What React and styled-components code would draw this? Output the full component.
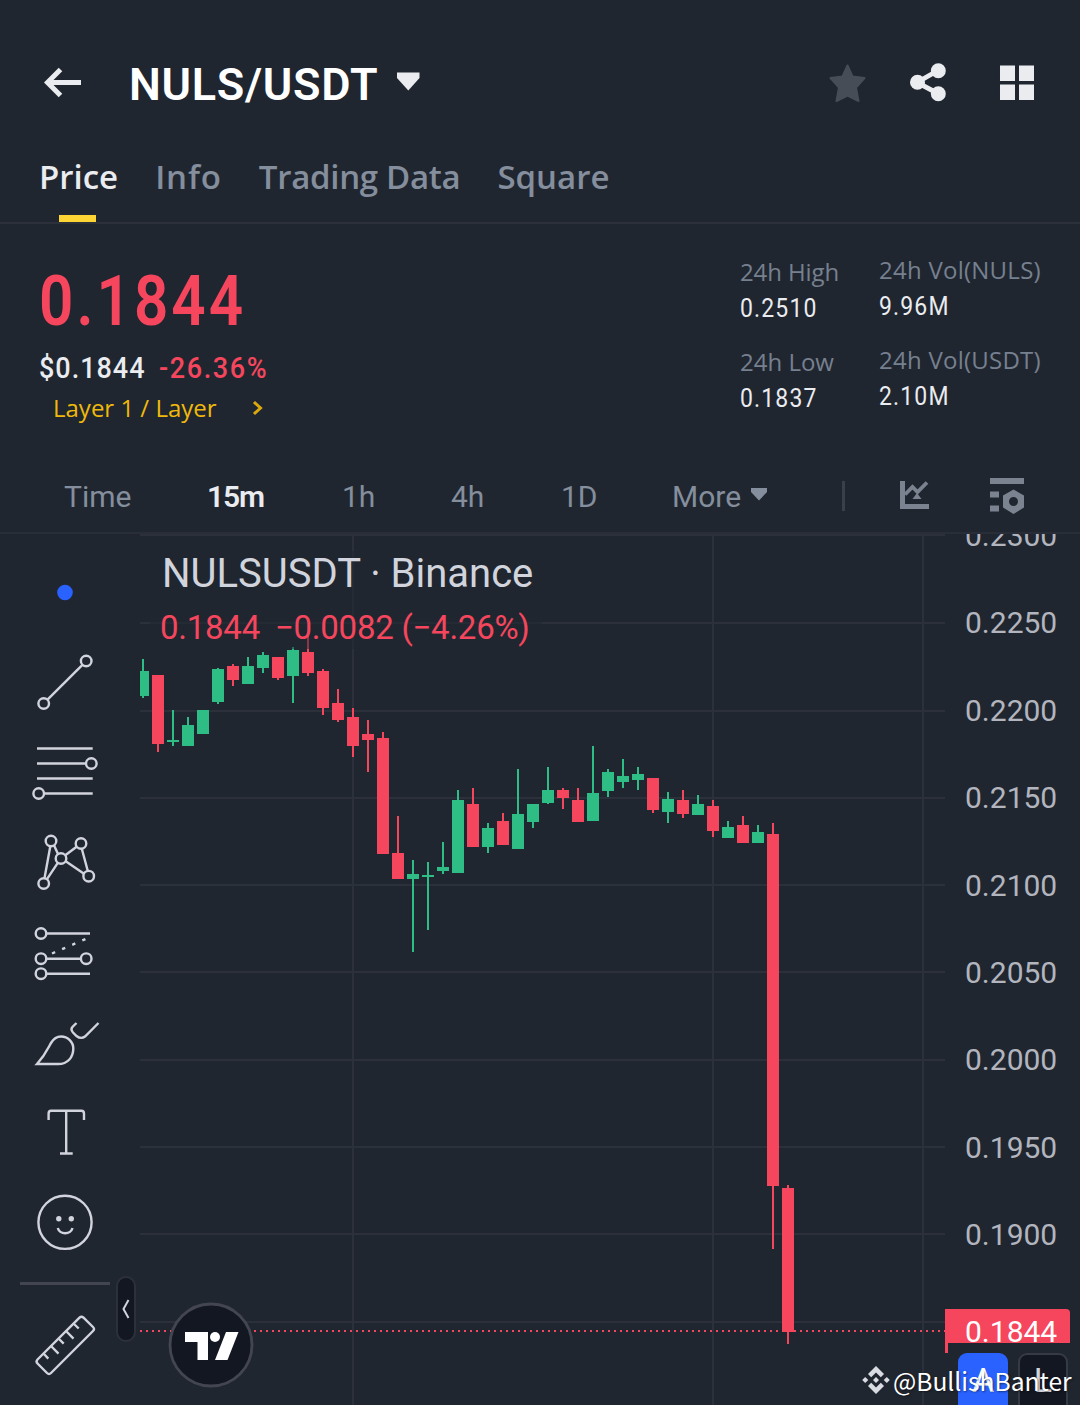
import React from 'react'
import styled, { createGlobalStyle } from 'styled-components'

const red = '#f6465d'
const green = '#2ebd85'

const tabs = [
  { name: "Price", active: true },
  { name: "Info", spacing: 0.9 },
  { name: "Trading Data", spacing: -0.3 },
  { name: "Square" }
]

const intervals = ["Time", "15m", "1h", "4h", "1D"]

const prices = ["0.2300", "0.2250", "0.2200", "0.2150", "0.2100", "0.2050", "0.2000", "0.1950", "0.1900"]

// [up, high, bodyTop, bodyBottom, low] one every 15px
const candles = [
  [1, 659, 671, 696, 697.5],
  [0, 675, 675, 744.4, 752.4],
  [1, 710, 740, 742.4, 746.4],
  [1, 717, 725, 746.4, 746.4],
  [1, 710, 710, 734, 734],
  [1, 668, 669, 702.4, 704.4],
  [0, 664, 666, 680, 686],
  [1, 657, 666, 684.4, 684.4],
  [1, 652, 655, 668, 673.4],
  [0, 657, 657, 678, 680.4],
  [1, 647, 650, 676.4, 703.4],
  [0, 636, 652, 673, 676.4],
  [0, 669, 671, 708, 715.4],
  [0, 689, 703, 720, 722.4],
  [0, 708, 717, 746.4, 757.4],
  [0, 720, 734, 740.4, 772.4],
  [0, 732, 738, 854.4, 854.4],
  [0, 816, 853, 879, 879.4],
  [1, 860, 874, 879, 952.4],
  [1, 862, 875, 877.4, 930.4],
  [1, 842, 867, 871.4, 874.4],
  [1, 790, 800, 873.4, 873.4],
  [0, 788, 804, 847.4, 847.4],
  [1, 823, 828, 847.4, 853.4],
  [0, 813, 821, 845.4, 845.4],
  [1, 769, 814, 849.4, 849.4],
  [1, 804, 804, 822.4, 828.4],
  [1, 767, 790, 803.4, 804.4],
  [0, 788, 790, 798.4, 809.4],
  [0, 788, 800, 822.4, 822.4],
  [1, 746, 793, 821.4, 821.4],
  [1, 769, 772, 791.4, 797.4],
  [1, 759, 776, 782.4, 788.4],
  [1, 767, 774, 780.4, 790.4],
  [0, 778, 778, 810.4, 813.4],
  [1, 792, 799, 812.4, 823.4],
  [0, 790, 800, 814.4, 818.4],
  [1, 795, 804, 815.4, 815.4],
  [0, 800, 806, 831.4, 837.4],
  [1, 821, 827, 838.4, 838.4],
  [0, 816, 825, 843.4, 843.4],
  [1, 825, 832, 843.4, 843.4],
  [0, 823, 834, 1186.4, 1249],
  [0, 1185, 1188, 1332.4, 1344]
]

const gridRows = [534, 622, 710, 797, 884, 971, 1059, 1146, 1233, 1321]
const gridCols = [353, 713, 923]

export default function App(){
  return (
    <Page>
      <GlobalStyle />
      <Header>
        <BackIcon viewBox="0 0 38 32">
          <path d="M16.500 2.500 3.500 15.500 16.500 28.500" />
          <path d="M5 15.500H37" />
        </BackIcon>
        <Pair>NULS/USDT</Pair>
        <PairCaret viewBox="0 0 24 19"><path d="M1 .5H23.500V6L12.300 18.500 1 6Z" fill="#eaecef" /></PairCaret>
        <HeaderIcons>
          <svg width="38" height="40" viewBox="0 0 38 40">
            <path d="M19.500 2.500 24.500 13.500 36.500 15 28 24.500 30.500 38 19.500 32.500 8.500 38 11 24.500 2.500 15 14.500 13.500Z" fill="#474d57" stroke="#474d57" strokeWidth="2" strokeLinejoin="round" />
          </svg>
          <svg width="38" height="40" viewBox="0 0 38 40">
            <path d="M29 7.500 8 19.500 29 30.500" fill="none" stroke="#eaecef" strokeWidth="4.800" />
            <circle cx="29.300" cy="7.700" r="7.500" fill="#eaecef" />
            <circle cx="8.500" cy="19.300" r="7.500" fill="#eaecef" />
            <circle cx="29.300" cy="30.700" r="7.500" fill="#eaecef" />
          </svg>
          <svg width="34" height="36" viewBox="0 0 34 36">
            <path d="M0 .5h15v15.500H0zM19 .5h15v15.500H19zM0 19.500h15v15.500H0zM19 19.500h15v15.500H19z" fill="#eaecef" />
          </svg>
        </HeaderIcons>
      </Header>

      <TabBar>
        {tabs.map(tab => <Tab key={tab.name} $active={tab.active} $spacing={tab.spacing}>{tab.name}</Tab>)}
      </TabBar>

      <Quote>
        <PriceBlock>
          <LastPrice>0.1844</LastPrice>
          <FiatRow>
            <Fiat>$0.1844</Fiat>
            <Change>-26.36%</Change>
          </FiatRow>
          <TagRow>
            Layer 1 / Layer
            <svg width="12" height="16" viewBox="0 0 12 16">
              <path d="M2 2 8.500 8 2 14" fill="none" stroke="#d9a90f" strokeWidth="3" />
            </svg>
          </TagRow>
        </PriceBlock>
        <Stats $width={139} $top={30}>
          <Label $spacing={-0.1}>24h High</Label>
          <Value>0.2510</Value>
          <Label $spacing={0}>24h Low</Label>
          <Value>0.1837</Value>
        </Stats>
        <Stats $width={201} $top={28}>
          <Label $spacing={0.25}>24h Vol(NULS)</Label>
          <Value>9.96M</Value>
          <Label $spacing={0.25}>24h Vol(USDT)</Label>
          <Value>2.10M</Value>
        </Stats>
      </Quote>

      <IntervalBar>
        {intervals.map(item => <Interval key={item} $active={item === "15m"}>{item}</Interval>)}
        <Interval>
          More
          <MoreCaret viewBox="0 0 18 13"><path d="M1 0H17V4L9 12.500 1 4Z" fill="#848e9c" /></MoreCaret>
        </Interval>
        <BarDivider />
        <svg width="30" height="32" viewBox="0 0 30 32">
          <path d="M2.500 1V26.500H29" fill="none" stroke="#7b8390" strokeWidth="5" />
          <path d="M5 14.500 12.500 7 17.500 12 27 2.500" fill="none" stroke="#7b8390" strokeWidth="3.800" />
          <path d="M17 13 21.500 19H12.500Z" fill="#7b8390" />
        </svg>
        <svg width="38" height="38" viewBox="0 0 38 38">
          <path d="M1 4H35M1 17.500H10M1 31.500H10" stroke="#7b8390" strokeWidth="6" />
          <path fillRule="evenodd" d="M24.500 12.500 35 18.500V30.500L24.500 37 14 30.500V18.500ZM24.500 20A4.500 4.500 0 1 0 24.500 29 4.500 4.500 0 1 0 24.500 20" fill="#7b8390" />
        </svg>
      </IntervalBar>

      <ChartArea>
        <Tools />
        <Plot>
          <Candles />
          <Legend>
            <Symbol>NULSUSDT · Binance</Symbol>
            <Delta><span>0.1844</span><span>−0.0082 (−4.26%)</span></Delta>
          </Legend>
          <ChartLogo viewBox="0 0 86 86">
            <circle cx="43" cy="43" r="41" fill="#131722" stroke="#434651" strokeWidth="2.800" />
            <path d="M17 30H40V58H29.500V40H17Z" fill="#fff" />
            <circle cx="47" cy="35" r="5" fill="#fff" />
            <path d="M58 30H70.500L59.500 58H47Z" fill="#fff" />
          </ChartLogo>
        </Plot>
        <Axis>
          {prices.map(p => <AxisLabel key={p}>{p}</AxisLabel>)}
          <PriceTag>0.1844</PriceTag>
          <TagEdge />
          <ScaleButtons>
            <ScaleButton $active>A</ScaleButton>
            <ScaleButton>L</ScaleButton>
          </ScaleButtons>
        </Axis>
        <Collapse>
          <svg width="8" height="20" viewBox="0 0 8 20"><path d="M6.500 1 1.500 10 6.500 19" fill="none" stroke="#d1d4dc" strokeWidth="2" /></svg>
        </Collapse>
        <Watermark>
          <svg width="28" height="28" viewBox="0 0 28 28" fill="#d9dbe3">
            <path d="M14 0 22 8 18.800 11.200 14 6.400 9.200 11.200 6 8Z" />
            <path d="M14 28 22 20 18.800 16.800 14 21.600 9.200 16.800 6 20Z" />
            <path d="M14 11 17 14 14 17 11 14ZM3.200 11 6.300 14 3.200 17 .2 14ZM24.800 11 27.800 14 24.800 17 21.700 14Z" />
          </svg>
          @BullishBanter
        </Watermark>
      </ChartArea>
    </Page>
  )
}

function Tools(){
  return (
    <ToolColumn>
      <ToolIcon viewBox="0 0 130 90"><circle cx="65" cy="45.500" r="7.800" fill="#2962ff" stroke="none" /></ToolIcon>
      <ToolIcon viewBox="0 0 130 90">
        <circle cx="86.200" cy="24" r="5.300" />
        <circle cx="43.700" cy="66.500" r="5.300" />
        <path d="M47.500 62.700 82.400 27.800" />
      </ToolIcon>
      <ToolIcon viewBox="0 0 130 90">
        <path d="M37 21.500H92.700M37 36.500H86M37 51.500H92.700M44 66.500H92.700" />
        <circle cx="91.300" cy="36.500" r="5.300" />
        <circle cx="38.700" cy="66.500" r="5.300" />
      </ToolIcon>
      <ToolIcon viewBox="0 0 130 90">
        <circle cx="51" cy="24" r="5.300" />
        <circle cx="81" cy="26.500" r="5.300" />
        <circle cx="61" cy="41.500" r="5.300" />
        <circle cx="43.700" cy="66.500" r="5.300" />
        <circle cx="88.700" cy="59.200" r="5.300" />
        <path d="M50.300 29.300 44.500 61.200M54 28.300 58 37M65.300 38.300 76.600 29.700M57.800 45.800 47 62.200M65.700 44.200 84 56.700M81.800 31.800 87.800 54" />
      </ToolIcon>
      <ToolIcon viewBox="0 0 130 90">
        <circle cx="41" cy="26.500" r="5.300" />
        <circle cx="41" cy="51.700" r="5.300" />
        <circle cx="41" cy="66.700" r="5.300" />
        <circle cx="86.200" cy="51.700" r="5.300" />
        <path d="M46.500 26.500H90M46.500 51.700H80.700M46.500 66.700H90" />
        <path d="M52 46.500 88 31" strokeDasharray="3.400 7.600" />
      </ToolIcon>
      <ToolIcon viewBox="0 0 130 90">
        <path d="M37 67C46 57 48.500 50 51 46C54 41 57 39.500 61 39.500C68 39.500 73.300 45 73.300 51.500C73.300 60 68 67 58 67Z" />
        <path d="M76.500 26 73 29.300Q70 32 73 35.500L76.500 39Q81 42.500 85 39.500L98.500 26" />
      </ToolIcon>
      <ToolIcon viewBox="0 0 130 90">
        <path d="M48.600 33V26.500Q48.600 23.700 51 23.700H81.500Q84 23.700 84 26.500V33M66.200 24V66.500M60 66.500H72.700" />
      </ToolIcon>
      <ToolIcon viewBox="0 0 130 90">
        <circle cx="65" cy="45.300" r="26.600" />
        <circle cx="58.800" cy="41.800" r="2.700" fill="#d1d4dc" stroke="none" />
        <circle cx="71.300" cy="41.800" r="2.700" fill="#d1d4dc" stroke="none" />
        <path d="M57.800 51A7.500 6.500 0 0 0 72.500 51" />
      </ToolIcon>
      <ToolDivider />
      <ToolIcon viewBox="0 0 130 90">
        <path d="M79.500 17.700Q81.500 15.700 83.500 17.700L93 27Q95 29 93 31L51 73Q49 75 47 73L37.500 63.500Q35.500 61.500 37.500 59.500Z" />
        <path d="M43.500 53.500 48.300 58.600M51 46 58.500 53.600M58.500 38.500 63.700 43.600M66 31 73.500 38.600M73.500 23.500 78.700 28.500" />
      </ToolIcon>
    </ToolColumn>
  )
}

function Candles(){
  return (
    <svg width="805" height="873" viewBox="140 532 805 873" shapeRendering="crispEdges">
      {gridRows.map(y => <rect key={y} x="140" y={y} width="805" height="2" fill="#2b303b" />)}
      {gridCols.map(x => <rect key={x} x={x - 1} y="532" width="2" height="873" fill="#2b303b" />)}
      <path d="M140 1331H945" stroke={red} strokeWidth="2" strokeDasharray="2 4" />
      {candles.map(([up, high, top, bottom, low], i) => {
        const x = 143 + i * 15
        return (
          <g key={x} fill={up ? green : red}>
            <rect x={x - 1} y={high} width="2" height={low - high} />
            <rect x={x - 6} y={top} width="12" height={bottom - top} />
          </g>
        )
      })}
    </svg>
  )
}

const GlobalStyle = createGlobalStyle`
  body {
    margin: 0;
    background: #202630;
  }
  * {
    box-sizing: border-box;
  }
  svg {
    display: block;
    flex: none;
  }
`

const Page = styled.div`
  width: 1080px;
  height: 1405px;
  overflow: hidden;
  background: #202630;
  color: #eaecef;
  font-family: Roboto, "Liberation Sans", sans-serif;
  white-space: nowrap;
`

const Header = styled.header`
  display: flex;
  align-items: center;
  height: 150px;
  padding: 16px 46px 0 44px;
`

const BackIcon = styled.svg`
  width: 38px;
  height: 32px;
  fill: none;
  stroke: #eaecef;
  stroke-width: 5;
`

const Pair = styled.h1`
  width: 250px;
  margin: 2px 0 0 47px;
  color: #fff;
  font-size: 45px;
  font-weight: 600;
  letter-spacing: 0.7px;
`

const PairCaret = styled.svg`
  width: 24px;
  height: 19px;
  margin: 0 0 3px 17px;
`

const HeaderIcons = styled.div`
  display: flex;
  align-items: center;
  margin-left: auto;

  svg + svg {
    margin-left: 43px;
  }
  svg:last-child {
    margin-left: 53px;
  }
`

const TabBar = styled.nav`
  display: flex;
  gap: 37px;
  height: 74px;
  padding-left: 39px;
  border-bottom: 2px solid #2b303b;
`

const Tab = styled.div`
  position: relative;
  font: 600 33px/54px "Open Sans", sans-serif;
  letter-spacing: ${props => props.$spacing || 0}px;
  color: ${props => props.$active ? '#eaecef' : '#848e9c'};

  &::after {
    content: "";
    position: absolute;
    left: 20px;
    bottom: 0;
    width: 37px;
    height: 7px;
    background: ${props => props.$active ? '#fcd535' : 'transparent'};
  }
`

const Quote = styled.section`
  display: flex;
  height: 236px;
  padding-left: 39px;
`

const PriceBlock = styled.div`
  width: 701px;
  padding-top: 37px;
`

/* narrow figures, set wide */
const Figures = styled.div`
  transform: scaleX(0.9);
  transform-origin: left;
`

const LastPrice = styled(Figures)`
  transform: scaleX(0.86);
  color: ${red};
  font-size: 70px;
  font-weight: 600;
  line-height: 80px;
  letter-spacing: 3.500px;
`

const FiatRow = styled.div`
  display: flex;
  gap: 2px;
  margin-top: 7px;
  font-size: 30px;
  font-weight: 500;
  line-height: 40px;
`

const Fiat = styled(Figures)`
  letter-spacing: 1.1px;
`

const Change = styled(Figures)`
  color: ${red};
  letter-spacing: 1.8px;
`

const TagRow = styled.div`
  display: flex;
  align-items: center;
  gap: 35px;
  padding-left: 14px;
  color: #f0b90b;
  font: 400 24px/40px "Open Sans", sans-serif;
`

const Stats = styled.div`
  width: ${props => props.$width}px;
  padding-top: ${props => props.$top}px;
`

const Label = styled.div`
  color: #76808f;
  font: 400 24px/36px "Open Sans", sans-serif;
  letter-spacing: ${props => props.$spacing}px;
`

const Value = styled(Figures)`
  margin: 1px 0 19px;
  font-size: 25.5px;
  line-height: 34px;
  letter-spacing: 1.3px;
`

const IntervalBar = styled.div`
  display: grid;
  grid-template-columns: 143px 135px 109px 110px 111px 170px 58px 89px 90px;
  align-items: center;
  height: 72px;
  padding-left: 64px;
`

const Interval = styled.div`
  display: flex;
  align-items: center;
  gap: 9px;
  font-size: 30px;
  font-weight: ${props => props.$active ? 600 : 400};
  letter-spacing: ${props => props.$active ? -1.2 : 0}px;
  color: ${props => props.$active ? '#eaecef' : '#848e9c'};
`

const MoreCaret = styled.svg`
  width: 18px;
  height: 13px;
  margin-bottom: 3px;
`

const BarDivider = styled.div`
  width: 3px;
  height: 30px;
  background: #3a404b;
`

const ChartArea = styled.main`
  position: relative;
  display: flex;
  height: 873px;
  overflow: hidden;
  border-top: 2px solid #282d37;
`

const ToolColumn = styled.div`
  width: 140px;
  padding-top: 13px;
`

const ToolIcon = styled.svg`
  width: 130px;
  height: 90px;
  fill: none;
  stroke: #d1d4dc;
  stroke-width: 2.4;
`

const ToolDivider = styled.div`
  width: 90px;
  height: 3px;
  margin: 15px 0 15px 20px;
  background: #434651;
`

const Plot = styled.div`
  position: relative;
  width: 805px;
  margin-top: -2px;
`

const Legend = styled.div`
  position: absolute;
  top: 19px;
  left: 10px;
`

const Symbol = styled.div`
  width: 392px;
  padding-left: 12px;
  color: #d1d4dc;
  font-size: 40px;
  line-height: 46px;
  background: rgba(32, 38, 48, 0.5);
`

const Delta = styled.div`
  display: flex;
  gap: 15px;
  width: 392px;
  padding: 11px 0 1px 10px;
  color: ${red};
  font-size: 33px;
  letter-spacing: -0.25px;
  line-height: 40px;
  background: rgba(32, 38, 48, 0.5);
`

const ChartLogo = styled.svg`
  position: absolute;
  left: 28px;
  top: 770px;
  width: 86px;
  height: 86px;
`

const Axis = styled.div`
  position: relative;
  width: 135px;
  margin-top: -42px;
  padding-left: 20px;
`

const AxisLabel = styled.div`
  height: 87.4px;
  color: #b2b5be;
  font-size: 30px;
  line-height: 87.4px;
`

const PriceTag = styled.div`
  position: absolute;
  left: 0;
  top: 817px;
  width: 125px;
  height: 34px;
  padding-left: 20px;
  overflow: hidden;
  border-radius: 0 4px 0 0;
  background: ${red};
  color: #fff;
  font-size: 30px;
  line-height: 46px;
`

const TagEdge = styled.div`
  position: absolute;
  left: 0;
  top: 851px;
  width: 3px;
  height: 10px;
  background: ${red};
`

const ScaleButtons = styled.div`
  position: absolute;
  left: 13px;
  top: 861px;
  display: flex;
  gap: 10px;
`

const ScaleButton = styled.div`
  width: 50px;
  height: 60px;
  border: 2px solid ${props => props.$active ? '#2962ff' : '#363a45'};
  border-radius: 9px;
  background: ${props => props.$active ? '#2962ff' : '#131722'};
  color: ${props => props.$active ? '#fff' : '#d1d4dc'};
  font-size: 34px;
  line-height: 50px;
  text-align: center;
`

const Collapse = styled.div`
  position: absolute;
  left: 116px;
  top: 742px;
  display: flex;
  align-items: center;
  justify-content: center;
  width: 20px;
  height: 66px;
  border: 2px solid #2b303b;
  border-radius: 10px;
  background: #131722;
`

const Watermark = styled.div`
  position: absolute;
  left: 862px;
  top: 830px;
  display: flex;
  align-items: center;
  gap: 3px;
  color: #fff;
  font: 400 24.6px/32px "Noto Sans CJK SC", sans-serif;
  text-shadow: 1px 1px 2px rgba(0, 0, 0, 0.5);
`
